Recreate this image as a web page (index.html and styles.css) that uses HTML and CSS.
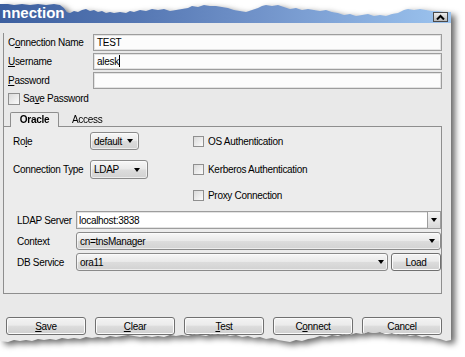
FILE: index.html
```html
<!DOCTYPE html>
<html lang="en">
<head>
  <meta charset="utf-8" />
  <meta name="viewport" content="width=device-width, initial-scale=1" />
  <title>Connection</title>
  <link rel="stylesheet" href="styles.css">
</head>
<body>
  <div class="shot">
    <div class="dialog">
      <div class="titlebar">
        <span class="title">nnection</span>
        <span class="close"><svg width="11" height="6" viewBox="0 0 11 6"><path d="M2 5.5 5.5 2 9 5.5" fill="none" stroke="#000" stroke-width="2"/></svg></span>
      </div>

      <div class="content">
        <div class="frame">
          <div class="fields">
            <label>C<u>o</u>nnection Name</label>
            <div class="input">TEST</div>
            <label><u>U</u>sername</label>
            <div class="input">alesk<span class="caret"></span></div>
            <label><u>P</u>assword</label>
            <div class="input"></div>
          </div>

          <div class="check save"><span class="box"></span><span>Sa<u>v</u>e Password</span></div>

          <div class="tabs">
            <div class="tab active">Oracle</div>
            <div class="tab">Access</div>
          </div>

          <div class="panel">
            <div class="opts">
              <label>Ro<u>l</u>e</label>
              <div class="combo role"><span>default</span><i class="arrow"></i></div>
              <div class="check"><span class="box"></span><span>OS Authentication</span></div>

              <label>Connection Type</label>
              <div class="combo type"><span>LDAP</span><i class="arrow"></i></div>
              <div class="check"><span class="box"></span><span>Kerberos Authentication</span></div>

              <div class="check proxy"><span class="box"></span><span>Proxy Connection</span></div>
            </div>

            <div class="ldap">
              <label>LDAP Server</label>
              <div class="input edit"><span>localhost:3838</span><span class="drop"><i class="arrow"></i></span></div>
              <label>Context</label>
              <div class="combo"><span>cn=tnsManager</span><i class="arrow"></i></div>
              <label>DB Service</label>
              <div class="svc">
                <div class="combo"><span>ora11</span><i class="arrow"></i></div>
                <button class="btn load">Load</button>
              </div>
            </div>
          </div>
        </div>

        <div class="buttons">
          <button class="btn"><u>S</u>ave</button>
          <button class="btn"><u>C</u>lear</button>
          <button class="btn"><u>T</u>est</button>
          <button class="btn">C<u>o</u>nnect</button>
          <button class="btn">Cancel</button>
        </div>
      </div>
    </div>
  </div>
</body>
</html>
```

FILE: styles.css
```css
body { margin: 0; background: #fff; font-family: "Liberation Sans", Arial, sans-serif; font-size: 10px; letter-spacing: -0.3px; color: #000; }
u { text-decoration-thickness: 1px; text-underline-offset: 1px; }

/* torn screenshot edges + shadow */
.shot { width: 465px; height: 357px; filter: drop-shadow(4px 3px 3px rgba(0,0,0,0.6)); }
.dialog {
  width: 451px; height: 344px; background: #e9e9e9;
  display: flex; flex-direction: column;
  clip-path: polygon(
    0 4px, 8px 4px, 14px 5px, 22px 4px, 30px 5px, 38px 4px, 46px 5px, 54px 4px, 60px 5px, 64px 8px, 67px 12px, 70px 13px,
    74px 11px, 78px 12px, 82px 10px, 86px 9px, 90px 11px, 94px 10px, 98px 12px, 102px 11px, 106px 13px, 110px 12px,
    114px 13px, 120px 12px, 126px 13px, 130px 11px, 134px 12px, 140px 10px, 146px 11px, 152px 9px, 158px 10px,
    164px 9px, 170px 11px, 176px 10px, 182px 9px, 188px 8px, 192px 6px, 198px 7px, 204px 5px, 210px 6px, 216px 6px,
    222px 7px, 228px 8px, 234px 10px, 240px 11px, 246px 12px, 252px 10px, 258px 8px, 262px 6px, 266px 5px,
    272px 6px, 278px 5px, 284px 7px, 290px 9px, 296px 8px, 302px 10px, 308px 9px, 314px 10px, 320px 11px,
    326px 10px, 332px 12px, 338px 13px, 344px 15px, 350px 14px, 356px 16px, 362px 15px, 368px 14px, 374px 16px,
    380px 15px, 386px 16px, 392px 14px, 398px 13px, 404px 10px, 408px 9px, 414px 10px, 420px 9px, 426px 10px,
    432px 11px, 438px 11px, 444px 12px, 451px 12px,
    451px 340px, 446px 341px, 440px 339px, 434px 338px, 428px 336px, 422px 337px, 416px 335px, 410px 336px,
    404px 334px, 398px 335px, 392px 333px, 386px 334px, 380px 332px, 374px 333px, 368px 332px, 362px 334px,
    356px 333px, 350px 335px, 344px 334px, 338px 336px, 332px 335px, 326px 337px, 320px 336px, 314px 338px,
    308px 339px, 302px 341px, 296px 340px, 290px 342px, 284px 341px, 278px 340px, 272px 338px, 266px 339px,
    260px 337px, 254px 338px, 248px 336px, 242px 337px, 236px 335px, 230px 336px, 224px 334px, 218px 335px,
    212px 334px, 206px 336px, 200px 335px, 194px 334px, 188px 336px, 182px 335px, 176px 336px, 170px 335px,
    164px 337px, 158px 336px, 152px 337px, 146px 336px, 140px 337px, 134px 336px, 128px 335px, 122px 336px,
    116px 337px, 110px 336px, 104px 338px, 98px 337px, 92px 338px, 86px 337px, 80px 339px, 74px 338px,
    68px 339px, 62px 338px, 56px 340px, 50px 339px, 44px 340px, 38px 339px, 32px 341px, 26px 340px,
    20px 341px, 14px 340px, 8px 342px, 0 341px
  );
}

.titlebar { position: relative; height: 23px; flex: none; background: linear-gradient(90deg, #3c5f9f 0%, #5577b3 30%, #7496cc 60%, #9cc4ef 100%); }
.title { display: block; padding: 4px 0 0 2px; font: bold 15px/18px "Liberation Sans", Arial, sans-serif; letter-spacing: 0; color: #fff; }
.close { position: absolute; right: 3px; top: 12px; width: 15px; height: 10px; box-sizing: border-box; border: 1px solid #4a4a4a; background: linear-gradient(#ededed, #b9b9b9); display: flex; align-items: center; justify-content: center; }

.content { padding-top: 10px; }
.frame { margin-left: 3px; width: 438px; border-left: 1px solid #8e8e8e; padding-top: 1px; }

.fields { display: grid; grid-template-columns: 85px 1fr; row-gap: 2px; padding-left: 4px; align-items: center; }
.input { height: 17px; box-sizing: border-box; border: 1px solid #9d9d9d; box-shadow: inset 0 0 0 1px #e3e3e3; background: #fcfcfc; padding: 0 3px; line-height: 15px; }
.caret { display: inline-block; width: 1px; height: 12px; background: #000; vertical-align: -2px; }

.check { display: flex; align-items: center; gap: 4px; }
.box { flex: none; width: 11px; height: 11px; box-sizing: border-box; border: 1px solid #8f8f8f; background: linear-gradient(135deg, #dadada, #fbfbfb); }
.save { margin: 3px 0 0 4px; height: 13px; gap: 3px; }
.save .box { width: 12px; height: 12px; }

.tabs { position: relative; z-index: 1; display: flex; align-items: flex-end; height: 14px; margin-top: 7px; padding-left: 6px; }
.tab { margin-left: 13px; line-height: 12px; }
.tab.active { margin: 0 0 -1px; width: 49px; height: 15px; box-sizing: border-box; border: 1px solid #8e8e8e; border-bottom: 0; border-radius: 2px 2px 0 0; background: #ececec; font-weight: bold; text-align: center; line-height: 13px; }

.panel { height: 168px; box-sizing: border-box; border: 1px solid #8e8e8e; border-left: 0; background: #ececec; padding: 5px 0 0 9px; }
.opts { display: grid; grid-template-columns: 77px 103px auto; grid-template-rows: 18px 19px 12px; row-gap: 10px; align-items: center; }
.proxy { grid-column: 3; }

.combo { height: 18px; box-sizing: border-box; border: 1px solid #8a8a8a; border-radius: 3px; background: linear-gradient(#f7f7f7, #e9e9e9 48%, #dcdcdc 52%, #d2d2d2); box-shadow: inset 0 0 0 1px rgba(255,255,255,0.6); display: flex; align-items: center; justify-content: space-between; padding: 0 5px 0 3px; }
.role { width: 49px; }
.type { width: 58px; height: 19px; padding-right: 7px; }
.arrow { width: 0; height: 0; border-top: 4px solid #000; border-left: 3.5px solid transparent; border-right: 3.5px solid transparent; }

.ldap { display: grid; grid-template-columns: 59px 1fr; grid-template-rows: repeat(3, 18px); row-gap: 3px; margin: 10px 0 0 4px; align-items: center; }
.ldap .input { height: 18px; }
.edit { display: flex; align-items: center; justify-content: space-between; padding: 0 0 0 2px; background: #fff; }
.drop { align-self: stretch; width: 12px; border-left: 1px solid #9d9d9d; background: linear-gradient(#f6f6f6, #d8d8d8); display: flex; align-items: center; justify-content: center; }
.svc { display: flex; gap: 3px; }
.svc .combo { flex: 1; padding-right: 3px; }

.btn { width: 80px; height: 18px; padding: 0; border: 1px solid #707070; border-radius: 3px; background: linear-gradient(#f3f3f3, #ebebeb 45%, #dddddd 50%, #cfcfcf); box-shadow: inset 0 0 0 1px #fbfbfb; font: inherit; letter-spacing: inherit; color: #000; }
.load { width: 50px; }
.buttons { display: flex; gap: 9px; padding-left: 6px; margin-top: 23px; }
```
